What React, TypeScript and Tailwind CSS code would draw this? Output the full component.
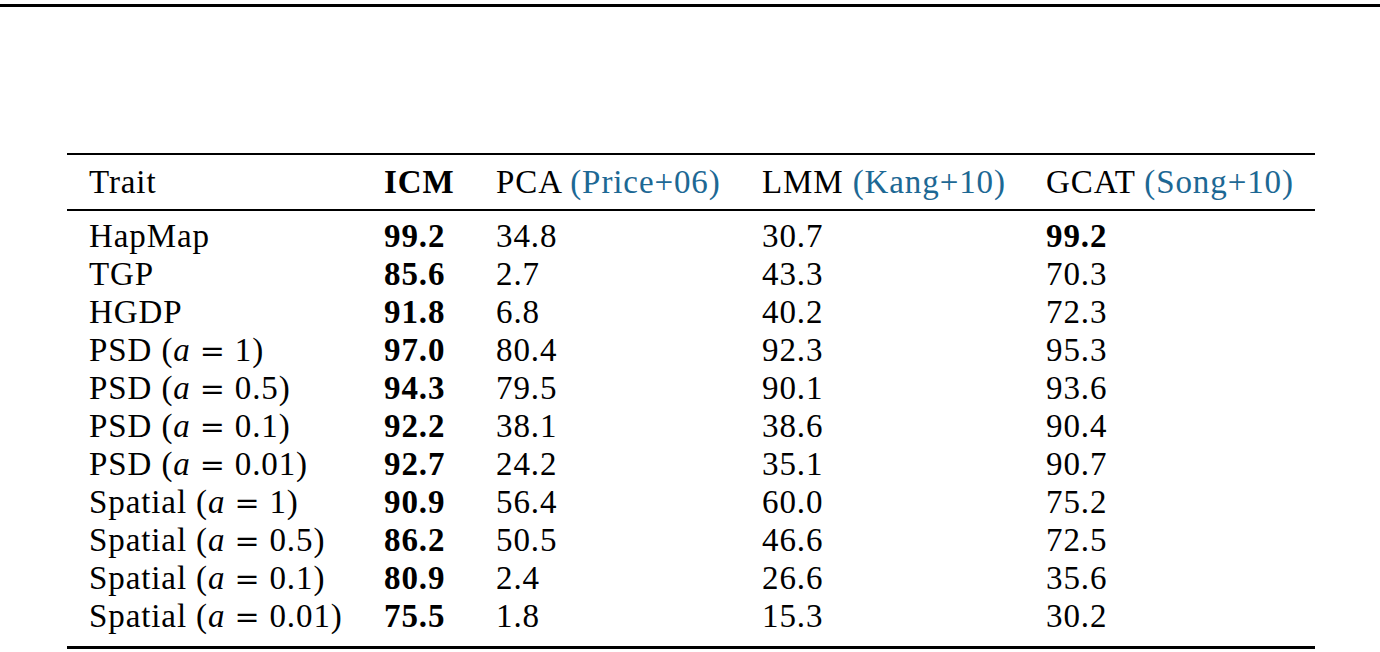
import React from "react";

type Row = { trait: React.ReactNode; icm: string; pca: string; lmm: string; gcat: string; gcatBold?: boolean };

const M = ({ v }: { v: string }) => (
  <>
    (<span className="italic">a</span>
    <span className="px-[9px] font-['DejaVu_Serif',serif] text-[30px] font-light leading-[0]">=</span>
    {v})
  </>
);

const rows: Row[] = [
  { trait: "HapMap", icm: "99.2", pca: "34.8", lmm: "30.7", gcat: "99.2", gcatBold: true },
  { trait: "TGP", icm: "85.6", pca: "2.7", lmm: "43.3", gcat: "70.3" },
  { trait: "HGDP", icm: "91.8", pca: "6.8", lmm: "40.2", gcat: "72.3" },
  { trait: <>PSD <M v="1" /></>, icm: "97.0", pca: "80.4", lmm: "92.3", gcat: "95.3" },
  { trait: <>PSD <M v="0.5" /></>, icm: "94.3", pca: "79.5", lmm: "90.1", gcat: "93.6" },
  { trait: <>PSD <M v="0.1" /></>, icm: "92.2", pca: "38.1", lmm: "38.6", gcat: "90.4" },
  { trait: <>PSD <M v="0.01" /></>, icm: "92.7", pca: "24.2", lmm: "35.1", gcat: "90.7" },
  { trait: <>Spatial <M v="1" /></>, icm: "90.9", pca: "56.4", lmm: "60.0", gcat: "75.2" },
  { trait: <>Spatial <M v="0.5" /></>, icm: "86.2", pca: "50.5", lmm: "46.6", gcat: "72.5" },
  { trait: <>Spatial <M v="0.1" /></>, icm: "80.9", pca: "2.4", lmm: "26.6", gcat: "35.6" },
  { trait: <>Spatial <M v="0.01" /></>, icm: "75.5", pca: "1.8", lmm: "15.3", gcat: "30.2" },
];

const C = ({ children, bold }: { children: React.ReactNode; bold?: boolean }) => (
  <div className={"whitespace-nowrap h-[38px]" + (bold ? " font-bold" : "")}>{children}</div>
);

const Cite = ({ children }: { children: React.ReactNode }) => <span className="text-[#1d6894]">{children}</span>;

const grid = "grid grid-cols-[295px_112px_266px_284px_1fr] pl-[22px]";

export default function App() {
  return (
    <div className="w-[1380px] h-[652px] bg-white overflow-hidden pt-[4px] text-black font-['Liberation_Serif','Times_New_Roman',serif] text-[33px] leading-[38px] tracking-[0.9px]">
      <div className="h-[3px] bg-black" />
      <div className="ml-[67px] w-[1248px] mt-[146px]">
        <div className="h-[2px] bg-black" />
        <div className={grid + " pt-[8px] pb-[8px]"}>
          <C>Trait</C>
          <C bold>ICM</C>
          <C>PCA <Cite>(Price+06)</Cite></C>
          <C>LMM <Cite>(Kang+10)</Cite></C>
          <C>GCAT <Cite>(Song+10)</Cite></C>
        </div>
        <div className="h-[2px] bg-black" />
        <div className="pt-[6px] pb-[11px]">
          {rows.map((r, i) => (
            <div key={i} className={grid + " h-[38px]"}>
              <C>{r.trait}</C>
              <C bold>{r.icm}</C>
              <C>{r.pca}</C>
              <C>{r.lmm}</C>
              <C bold={r.gcatBold}>{r.gcat}</C>
            </div>
          ))}
        </div>
        <div className="h-[3px] bg-black" />
      </div>
    </div>
  );
}
